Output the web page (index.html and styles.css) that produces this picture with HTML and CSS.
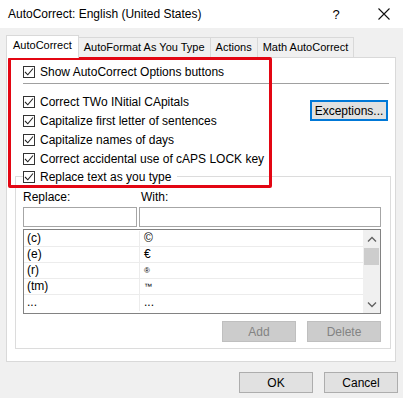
FILE: index.html
```html
<!DOCTYPE html>
<html>
	<head>
		<meta charset="utf-8">
		<title>AutoCorrect</title>
		<link rel="stylesheet" href="styles.css">
	</head>
	<body>
		<div class="titlebar">
			<span class="title">AutoCorrect: English (United States)</span>
			<span class="help">?</span>
			<span class="close">
				<svg width="12" height="12" viewBox="0 0 12 12"><path d="M0.5 0.5 L11.5 11.5 M11.5 0.5 L0.5 11.5" stroke="#111" stroke-width="1.1" fill="none"/></svg>
			</span>
		</div>

		<div class="main">
			<ul class="tabs">
				<li class="tab active">AutoCorrect</li>
				<li class="tab">AutoFormat As You Type</li>
				<li class="tab">Actions</li>
				<li class="tab">Math AutoCorrect</li>
			</ul>

			<section class="panel">
				<div class="highlight"></div>

				<label class="check"><span class="box"></span>Show AutoCorrect Options buttons</label>
				<div class="sep"></div>

				<div class="options">
					<div class="opt-list">
						<label class="check"><span class="box"></span>Correct TWo INitial CApitals</label>
						<label class="check"><span class="box"></span>Capitalize first letter of sentences</label>
						<label class="check"><span class="box"></span>Capitalize names of days</label>
						<label class="check"><span class="box"></span>Correct accidental use of cAPS LOCK key</label>
					</div>
					<button class="btn exceptions">Exceptions...</button>
				</div>

				<fieldset class="group">
					<legend class="check"><span class="box"></span>Replace text as you type</legend>

					<div class="labels">
						<span class="lbl-replace">Replace:</span>
						<span>With:</span>
					</div>
					<div class="inputs">
						<div class="input replace"></div>
						<div class="input with"></div>
					</div>

					<div class="list">
						<div class="rows">
							<div class="row"><span class="c1">(c)</span><span class="c2">©</span></div>
							<div class="row"><span class="c1">(e)</span><span class="c2">€</span></div>
							<div class="row"><span class="c1">(r)</span><span class="c2 small">®</span></div>
							<div class="row"><span class="c1">(tm)</span><span class="c2 small">™</span></div>
							<div class="row"><span class="c1">...</span><span class="c2">...</span></div>
						</div>
						<div class="scrollbar">
							<svg width="10" height="7" viewBox="0 0 10 7"><path d="M1 5.5 L5 1.5 L9 5.5" stroke="#606060" stroke-width="1.3" fill="none"/></svg>
							<div class="thumb"></div>
							<div class="track"></div>
							<svg width="10" height="7" viewBox="0 0 10 7"><path d="M1 1.5 L5 5.5 L9 1.5" stroke="#606060" stroke-width="1.3" fill="none"/></svg>
						</div>
					</div>

					<div class="actions">
						<button class="btn disabled">Add</button>
						<button class="btn disabled">Delete</button>
					</div>
				</fieldset>
			</section>

			<div class="footer">
				<button class="btn">OK</button>
				<button class="btn">Cancel</button>
			</div>
		</div>
	</body>
</html>
```

FILE: styles.css
```css
* {
	box-sizing: border-box;
}
body {
	margin: 0;
	padding: 0;
	width: 403px;
	height: 398px;
	overflow: hidden;
	background: #f0f0f0;
	font-family: "Liberation Sans", Arial, sans-serif;
	font-size: 12px;
	color: #000;
}
ul, li {
	margin: 0;
	padding: 0;
	list-style: none;
}

/* title bar */
.titlebar {
	height: 28px;
	background: #fff;
	display: flex;
	align-items: center;
	padding-left: 8px;
}
.title {
	font-size: 12px;
	flex: 1;
}
.help {
	font-size: 13px;
	width: 46px;
	text-align: center;
	margin-right: 4px;
}
.close {
	width: 40px;
	display: flex;
	justify-content: center;
	padding-left: 2px;
}

.main {
	padding: 7px 7px 0 6px;
}

/* tabs */
.tabs {
	display: flex;
	align-items: flex-end;
	height: 22px;
	padding-left: 0;
}
.tab {
	height: 20px;
	line-height: 19px;
	padding: 0 5px;
	font-size: 11px;
	border: 1px solid #d9d9d9;
	border-bottom: none;
	background: #f0f0f0;
	margin-left: -1px;
	white-space: nowrap;
}
.tab.active {
	height: 23px;
	line-height: 19px;
	background: #fff;
	margin-left: 0;
	margin-bottom: -1px;
	position: relative;
	z-index: 1;
	padding: 0 6px;
}

/* panel */
.panel {
	position: relative;
	background: #fff;
	border: 1px solid #d9d9d9;
	height: 305px;
	padding: 4px 6px 0 16px;
}
.highlight {
	position: absolute;
	left: 1px;
	top: -1px;
	width: 264px;
	height: 131px;
	border: 3px solid #e30613;
	border-radius: 2px;
	pointer-events: none;
}

.check {
	display: flex;
	align-items: center;
	height: 19px;
	white-space: nowrap;
}
.box {
	width: 12px;
	height: 12px;
	border: 1px solid #333;
	margin-right: 5px;
	background: #fff url("data:image/svg+xml;utf8,<svg xmlns='http://www.w3.org/2000/svg' width='10' height='10' viewBox='0 0 10 10'><path d='M1 5 L3.8 7.8 L9 1.5' stroke='%23222' stroke-width='1.1' fill='none'/></svg>") no-repeat center;
}

.sep {
	height: 1px;
	background: #a0a0a0;
	margin: 2px 0 8px 0;
}

.options {
	display: flex;
	justify-content: space-between;
}
.btn {
	font-family: inherit;
	font-size: 12px;
	background: #e1e1e1;
	border: 1px solid #adadad;
	height: 21px;
	width: 74px;
	padding: 0;
	color: #000;
}
.exceptions {
	width: 78px;
	margin-top: 8px;
	border: 2px solid #0078d7;
	margin-right: 1px;
}

/* replace group */
.group {
	margin: -1px 0 0 -8px;
	border: 1px solid #dcdcdc;
	padding: 0 9px 6px 7px;
	min-width: 0;
	width: 376px;
}
.group legend {
	padding: 0 6px 0 0;
	margin: 0;
}
.labels {
	display: flex;
	height: 20px;
	align-items: center;
	margin-top: 1px;
}
.lbl-replace {
	width: 118px;
}
.inputs {
	display: flex;
	gap: 2px;
}
.input {
	height: 20px;
	border: 1px solid #a6a6a6;
	background: #fff;
}
.input.replace {
	width: 114px;
}
.input.with {
	flex: 1;
}

.list {
	margin-top: 2px;
	height: 85px;
	border: 1px solid #828282;
	display: flex;
	background: #fff;
}
.rows {
	flex: 1;
	padding-top: 1px;
}
.row {
	display: flex;
	height: 16px;
	border-bottom: 1px solid #ececec;
	line-height: 15px;
}
.row:last-child {
	border-bottom: none;
}
.c1 {
	width: 116px;
	padding-left: 3px;
	border-right: 1px solid #ececec;
}
.c2 {
	padding-left: 4px;
}
.c2.small {
	font-size: 8px;
}
.scrollbar {
	width: 17px;
	background: #f0f0f0;
	display: flex;
	flex-direction: column;
	align-items: center;
	padding: 6px 0 5px;
}
.thumb {
	width: 15px;
	height: 17px;
	background: #cdcdcd;
	margin-top: 5px;
}
.track {
	flex: 1;
}

.actions {
	display: flex;
	justify-content: flex-end;
	gap: 11px;
	margin-top: 7px;
}
.btn.disabled {
	background: #cccccc;
	border-color: #bfbfbf;
	color: #838383;
}

.footer {
	display: flex;
	justify-content: flex-end;
	gap: 11px;
	margin-top: 10px;
	margin-right: -2px;
}
```
